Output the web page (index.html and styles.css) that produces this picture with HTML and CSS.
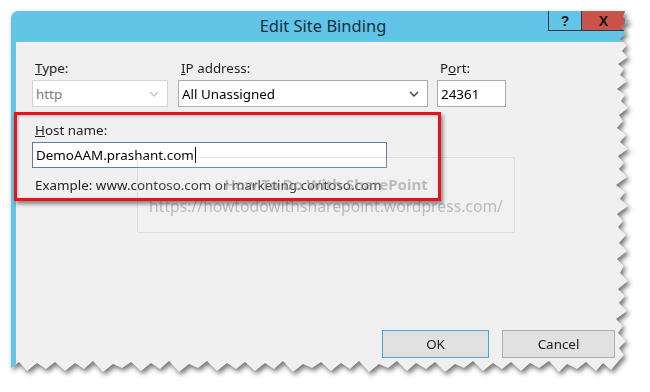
FILE: index.html
```html
<!DOCTYPE html>
<html>
<head>
<meta charset="utf-8">
<link rel="stylesheet" href="styles.css">
</head>
<body>
<div class="page">
  <div class="shadow">
    <div class="dialog">
      <div class="titlebar">
        <span></span>
        <div class="title">Edit Site Binding</div>
        <div class="controls">
          <div class="help">?</div>
          <div class="close">X</div>
        </div>
      </div>
      <div class="content">
        <div class="row">
          <div class="field f-type">
            <label><u>T</u>ype:</label>
            <div class="select disabled"><span>http</span><svg width="10" height="6" viewBox="0 0 10 6"><path d="M1 1 L5 5 L9 1" fill="none" stroke="#c4c4c4" stroke-width="1.3"/></svg></div>
          </div>
          <div class="field f-ip">
            <label><u>I</u>P address:</label>
            <div class="select"><span>All Unassigned</span><svg width="10" height="6" viewBox="0 0 10 6"><path d="M1 1 L5 5 L9 1" fill="none" stroke="#404040" stroke-width="1.4"/></svg></div>
          </div>
          <div class="field f-port">
            <label>P<u>o</u>rt:</label>
            <div class="input">24361</div>
          </div>
        </div>
        <div class="host">
          <label><u>H</u>ost name:</label>
          <div class="input focused">DemoAAM.prashant.com<span class="caret"></span></div>
          <div class="example">Example: www.contoso.com or marketing.contoso.com</div>
        </div>
        <div class="footer">
          <div class="btn default">OK</div>
          <div class="btn cancel">Cancel</div>
        </div>
      </div>
    </div>
  </div>
  <div class="watermark">
    <div class="wm-title">How To Do With SharePoint</div>
    <div class="wm-url">https://howtodowithsharepoint.wordpress.com/</div>
  </div>
  <div class="highlight"></div>
</div>
</body>
</html>
```

FILE: styles.css
```css
* { box-sizing: border-box; }
html, body { margin: 0; padding: 0; background: #ffffff; }
body {
  width: 650px;
  height: 392px;
  overflow: hidden;
  font-family: "Noto Sans", "Open Sans", "DejaVu Sans", sans-serif;
  font-size: 13.4px;
  color: #000;
}
.page {
  position: relative;
  width: 650px;
  height: 392px;
  padding: 11px 0 0 11px;
}
.shadow {
  width: 619px;
  height: 362px;
  filter: drop-shadow(2px 3px 2.5px rgba(0,0,0,0.55));
}
.dialog {
  width: 619px;
  height: 362px;
  background: #f0f0f0;
  border-left: 5px solid #62c5e8;
  border-top-left-radius: 7px;
  display: flex;
  flex-direction: column;
  clip-path: polygon(0 0, 614px 0, 612px 6px, 618px 10px, 610px 16px, 615px 22px, 608px 28px, 616px 34px, 611px 40px, 617px 46px, 607px 53px, 613px 58px, 609px 64px, 616px 70px, 606px 78px, 614px 84px, 610px 90px, 617px 97px, 608px 104px, 612px 110px, 606px 117px, 615px 124px, 609px 131px, 617px 138px, 607px 145px, 613px 152px, 608px 158px, 616px 166px, 605px 174px, 614px 181px, 609px 188px, 617px 195px, 606px 203px, 612px 210px, 607px 216px, 615px 224px, 608px 232px, 616px 240px, 606px 248px, 613px 255px, 609px 262px, 617px 270px, 607px 278px, 614px 285px, 608px 292px, 616px 300px, 605px 308px, 612px 315px, 607px 322px, 615px 330px, 608px 337px, 613px 344px, 606px 352px, 600px 359px, 592px 352px, 585px 360px, 575px 351px, 566px 358px, 556px 353px, 548px 361px, 538px 350px, 528px 357px, 519px 352px, 510px 360px, 500px 351px, 491px 358px, 482px 352px, 472px 360px, 462px 350px, 453px 357px, 444px 353px, 434px 361px, 424px 351px, 415px 358px, 405px 352px, 396px 360px, 386px 350px, 377px 357px, 368px 353px, 358px 361px, 348px 350px, 339px 358px, 330px 352px, 320px 360px, 310px 351px, 301px 357px, 292px 353px, 282px 361px, 272px 350px, 263px 358px, 254px 352px, 244px 360px, 234px 351px, 225px 358px, 216px 352px, 206px 360px, 196px 350px, 187px 357px, 178px 353px, 168px 361px, 158px 350px, 149px 358px, 140px 352px, 130px 360px, 120px 351px, 111px 357px, 102px 353px, 92px 361px, 82px 350px, 73px 358px, 64px 352px, 54px 360px, 44px 351px, 35px 358px, 26px 352px, 16px 360px, 8px 351px, 0 357px);
}
.titlebar {
  height: 31px;
  background: #62c5e8;
  display: grid;
  grid-template-columns: 1fr auto 1fr;
  align-items: start;
}
.title {
  font-size: 16.5px;
  line-height: 30px;
  color: #14303c;
  white-space: nowrap;
}
.controls {
  display: flex;
  justify-content: flex-end;
}
.help, .close {
  height: 20px;
  font-family: "Liberation Sans", Arial, sans-serif;
  font-weight: bold;
  display: flex;
  align-items: center;
  justify-content: center;
  border-bottom: 1px solid #2e3a40;
}
.help {
  width: 33px;
  background: #62c5e8;
  border-left: 1px solid #2e3a40;
  color: #1a1a1a;
  font-size: 14px;
}
.close {
  width: 44px;
  background: #c9524b;
  color: #111;
  font-size: 14px;
  border-left: 1px solid #2e3a40;
  margin-right: 5px;
}
.content {
  flex: 1;
  display: flex;
  flex-direction: column;
  padding: 18px 15px 15px 16px;
}
label {
  display: block;
  height: 16px;
  line-height: 16px;
  padding-left: 3px;
  margin-bottom: 4px;
  color: #1e1e1e;
}
.row {
  display: grid;
  grid-template-columns: 136px 250px 68px;
  column-gap: 10px;
}
.f-port { margin-left: -1px; }
.select, .input {
  height: 27px;
  background: #fff;
  border: 1px solid #acacac;
  display: flex;
  align-items: center;
  justify-content: space-between;
  padding: 0 8px 0 3px;
  line-height: 16px;
  white-space: nowrap;
}
.select.disabled {
  border-color: #d5d5d5;
  color: #7a7a7a;
}
.input { border-color: #aaaaaa; }
.host {
  margin-top: 15px;
}
.host .input {
  width: 355px;
  height: 26px;
  border-color: #5a7fa6;
  justify-content: flex-start;
}
.caret {
  display: inline-block;
  width: 1px;
  height: 16px;
  background: #000;
  margin-left: 1px;
}
.example {
  margin-top: 9px;
  padding-left: 3px;
  line-height: 16px;
  color: #1e1e1e;
}
.footer {
  margin-top: auto;
  display: flex;
  justify-content: flex-end;
  gap: 13px;
}
.btn {
  height: 28px;
  width: 107px;
  background: #e1e1e1;
  border: 1px solid #adadad;
  display: flex;
  align-items: center;
  justify-content: center;
  color: #1e1e1e;
}
.btn.default { border-color: #4f9fd8; }
.btn.cancel { width: 113px; }
.watermark {
  position: absolute;
  left: 137px;
  top: 157px;
  width: 378px;
  height: 76px;
  border: 1px solid rgba(0,0,0,0.09);
  background: rgba(255,255,255,0.12);
  text-align: center;
  color: rgba(140,140,140,0.55);
  padding-top: 16px;
  pointer-events: none;
}
.wm-title {
  font-size: 15px;
  font-weight: bold;
  line-height: 20px;
  padding-left: 0;
}
.wm-url {
  font-size: 15.7px;
  line-height: 20px;
  margin-top: 2px;
}
.highlight {
  position: absolute;
  left: 14px;
  top: 112px;
  width: 427px;
  height: 89px;
  border: 3px solid #e5141c;
  box-shadow: 2px 3px 4px rgba(0,0,0,0.45), inset 1px 1px 3px rgba(0,0,0,0.25);
  pointer-events: none;
}
```
